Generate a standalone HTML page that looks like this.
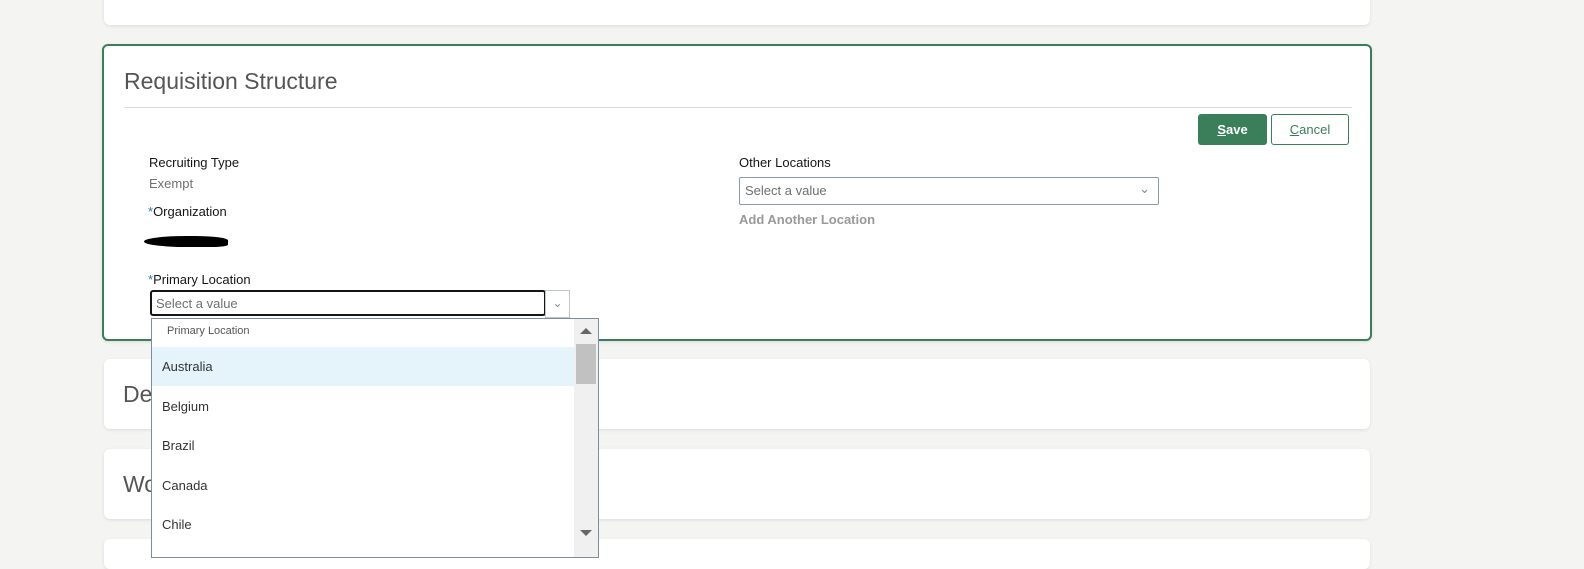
<!DOCTYPE html>
<html><head><style>
body{margin:0;width:1584px;height:548px;overflow:hidden;background:#f4f4f2;font-family:"Liberation Sans",sans-serif;position:relative}
.card{position:absolute;background:#fff;border-radius:6px;box-shadow:0 1px 3px rgba(0,0,0,.1)}
.lbl{position:absolute;font-size:13px;color:#161513}
.val{position:absolute;font-size:13px;color:#6f6f6f}
.ast{color:#227aa8}
.sel{position:absolute;height:26px;box-sizing:border-box;font-size:13px;color:#6f6f6f;padding:5px 5px}
.opt{position:absolute;left:0;width:422px;height:39px;font-size:13px;color:#333;padding-left:10px;line-height:39px;box-sizing:border-box}
.ttl{position:absolute;font-size:23px;color:#555}
</style></head><body>
<div class="card" style="left:104px;top:-10px;width:1266px;height:35px"></div>
<div class="card" style="left:102px;top:44px;width:1270px;height:297px;border:2px solid #3a7e5a;box-sizing:border-box;border-radius:6px">
 <div class="ttl" style="left:20px;top:22px">Requisition Structure</div>
 <div style="position:absolute;left:20px;top:61px;width:1228px;height:1px;background:#dcdcdc"></div>
 <div style="position:absolute;left:1094px;top:68px;width:69px;height:31px;background:#3a7e5a;border-radius:3px;color:#fff;font-weight:bold;font-size:13px;text-align:center;line-height:31px"><u>S</u>ave</div>
 <div style="position:absolute;left:1167px;top:68px;width:78px;height:31px;border:1px solid #3a7e5a;box-sizing:border-box;border-radius:3px;color:#3a7e5a;font-size:13px;text-align:center;line-height:29px"><u>C</u>ancel</div>
</div>
<div class="lbl" style="left:149px;top:155px">Recruiting Type</div>
<div class="val" style="left:149px;top:176px">Exempt</div>
<div class="lbl" style="left:148px;top:204px"><span class="ast">*</span>Organization</div>
<div style="position:absolute;left:144px;top:236px;width:84px;height:11px;background:#000;border-radius:50% 40% 20% 50%"></div>
<div class="lbl" style="left:148px;top:272px"><span class="ast">*</span>Primary Location</div>
<div class="sel" style="left:150px;top:290px;width:396px;border:2px solid #161513;border-radius:3px;padding:4px 4px">Select a value</div>
<div style="position:absolute;left:545px;top:290px;width:25px;height:28px;border:1px solid #bfc7cc;box-sizing:border-box;color:#888;font-size:12px;text-align:center;line-height:24px">&#8964;</div>
<div class="lbl" style="left:739px;top:155px">Other Locations</div>
<div class="sel" style="left:739px;top:177px;width:420px;height:28px;border:1px solid #8a9ba8;border-radius:2px">Select a value<span style="position:absolute;right:8px;top:3px;color:#888">&#8964;</span></div>
<div class="val" style="left:739px;top:212px;color:#999;font-weight:bold">Add Another Location</div>
<div class="card" style="left:104px;top:359px;width:1266px;height:70px"><div class="ttl" style="left:19px;top:22px">De</div></div>
<div class="card" style="left:104px;top:449px;width:1266px;height:70px"><div class="ttl" style="left:19px;top:22px">Wo</div></div>
<div class="card" style="left:104px;top:539px;width:1266px;height:30px"></div>
<div style="position:absolute;left:151px;top:318px;width:448px;height:240px;background:#fff;border:1px solid #7e8d99;box-sizing:border-box;overflow:hidden">
 <div style="position:absolute;left:15px;top:6px;font-size:11px;color:#555">Primary Location</div>
 <div class="opt" style="top:28px;background:#e4f4fa">Australia</div>
 <div class="opt" style="top:68px">Belgium</div>
 <div class="opt" style="top:107px">Brazil</div>
 <div class="opt" style="top:147px">Canada</div>
 <div class="opt" style="top:186px">Chile</div>
 <div style="position:absolute;left:422px;top:0;width:24px;height:240px;background:#f0f0f0"></div>
 <div style="position:absolute;left:424px;top:25px;width:20px;height:40px;background:#c1c1c1"></div>
 <div style="position:absolute;left:428px;top:9px;border:6px solid transparent;border-bottom:6px solid #666;border-top:0"></div>
 <div style="position:absolute;left:428px;top:211px;border:6px solid transparent;border-top:6px solid #666;border-bottom:0"></div>
</div>
</body></html>
